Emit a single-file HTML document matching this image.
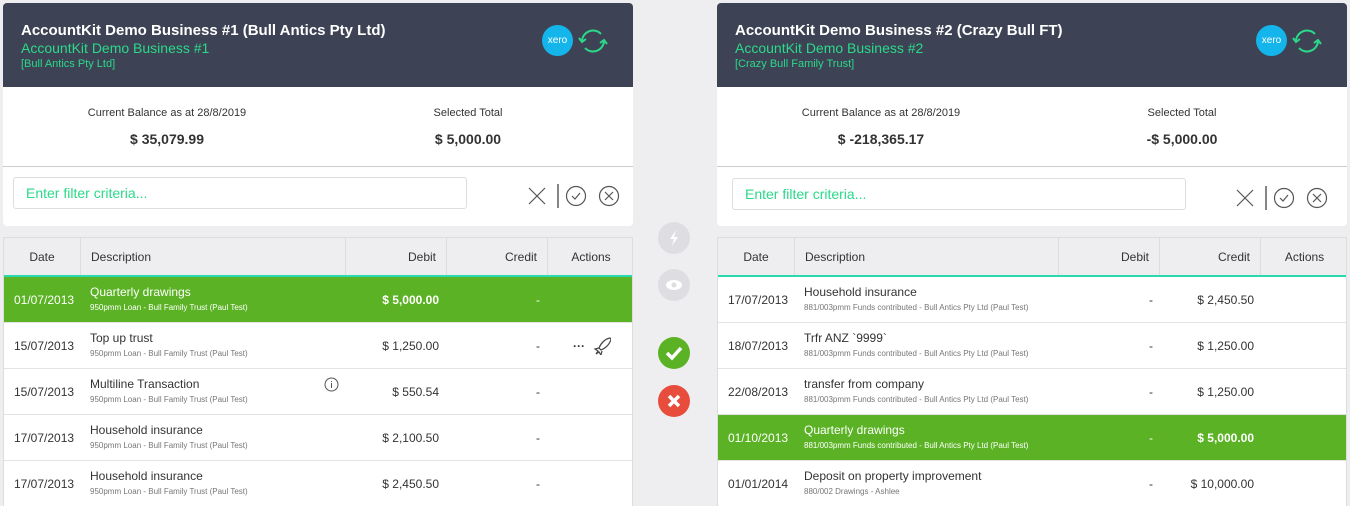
<!DOCTYPE html><html><head><style>
*{box-sizing:border-box;margin:0;padding:0}
html,body{width:1350px;height:506px;overflow:hidden}
body{background:#eeeef0;font-family:"Liberation Sans",sans-serif;position:relative;color:#333}
.p{position:absolute;top:3px;width:630px;height:520px}
.hd{height:84px;background:#3d4354;border-radius:4px 4px 0 0;padding:19px 18px;position:relative}
.t1{color:#fff;font-weight:bold;font-size:15px}
.t2{color:#2bd98a;font-size:14px;margin-top:1px}
.t3{color:#2bd98a;font-size:11px;margin-top:2px}
.xero{position:absolute;right:60px;top:22px;width:31px;height:31px;border-radius:50%;background:#13b5ea;color:#fff;font-size:10px;text-align:center;line-height:31px}
.sync{position:absolute;right:24px;top:22px}
.bal{background:#fff;height:80px;border-bottom:1px solid #ccc;position:relative;font-size:11px}
.bal div{position:absolute;text-align:center;width:240px}
.bal .v{font-weight:bold;font-size:14px;color:#333}
.flt{background:#fff;height:59px;position:relative;border-radius:0 0 4px 4px}
.in{position:absolute;left:10px;top:10px;width:454px;height:32px;border:1px solid #ddd;border-radius:3px;color:#2bd98a;font-size:14px;padding:7px 12px}
.ic{position:absolute;top:16px}
.tb{position:absolute;top:234px;left:0;width:630px;background:#fff;border:1px solid #ddd}
.row{height:46px;border-bottom:1px solid #e3e3e3;position:relative;font-size:12px}
.hr{height:39px;background:#eeeef0;border-bottom:2px solid #2bd9b0;font-size:12px}
.c{position:absolute;top:0;height:100%}
.hr .c{line-height:38px;border-right:1px solid #ddd}
.row .d{line-height:46px}
.g{background:#5ab224;color:#fff}
.s{font-size:8px;color:#777;margin-top:4px}
.g .s{color:#fff}
.ds{padding-top:8px}
.circ{position:absolute;left:658px;width:32px;height:32px;border-radius:50%}
</style></head><body>

<!-- LEFT -->
<div class="p" style="left:3px">
<div class="hd"><div class="t1">AccountKit Demo Business #1 (Bull Antics Pty Ltd)</div><div class="t2">AccountKit Demo Business #1</div><div class="t3">[Bull Antics Pty Ltd]</div>
<div class="xero">xero</div>
<svg class="sync" width="32" height="32" viewBox="0 0 32 32" fill="none" stroke="#2bd98a" stroke-width="2"><path d="M5 17a11 11 0 0 1 19-8"/><path d="M27 15a11 11 0 0 1-19 8"/><path d="M2 13l3 4 4-3"/><path d="M30 19l-3-4-4 3"/></svg></div>
<div class="bal"><div style="left:44px;top:20px">Current Balance as at 28/8/2019</div><div class="v" style="left:44px;top:44px">$ 35,079.99</div>
<div style="left:345px;top:20px">Selected Total</div><div class="v" style="left:345px;top:44px">$ 5,000.00</div></div>
<div class="flt"><div class="in">Enter filter criteria...</div>
<svg class="ic" style="left:524px" width="100" height="26" viewBox="0 0 100 26" fill="none" stroke="#555" stroke-width="1.2"><path d="M2 5l16 16M18 5L2 21"/><path d="M31 1v24" stroke="#333"/><circle cx="49" cy="13" r="9.5"/><path d="M45 13l3 3 5-6"/><circle cx="82" cy="13" r="9.5"/><path d="M78 9l8 8M86 9l-8 8"/></svg></div>
<div class="tb">
<div class="hr" style="position:relative"><div class="c" style="left:0;width:77px;text-align:center">Date</div><div class="c" style="left:77px;width:265px;padding-left:10px">Description</div><div class="c" style="left:342px;width:101px;text-align:right;padding-right:10px">Debit</div><div class="c" style="left:443px;width:101px;text-align:right;padding-right:10px">Credit</div><div class="c" style="left:544px;width:86px;text-align:center;border:none">Actions</div></div>
<div class="row g"><div class="c d" style="left:10px">01/07/2013</div><div class="c ds" style="left:86px">Quarterly drawings<div class="s">950pmm Loan - Bull Family Trust (Paul Test)</div></div><div class="c d" style="right:193px;font-weight:bold">$ 5,000.00</div><div class="c d" style="right:92px">-</div></div>
<div class="row"><div class="c d" style="left:10px">15/07/2013</div><div class="c ds" style="left:86px">Top up trust<div class="s">950pmm Loan - Bull Family Trust (Paul Test)</div></div><div class="c d" style="right:193px">$ 1,250.00</div><div class="c d" style="right:92px">-</div><div class="c d" style="left:569px;font-weight:bold">···</div><svg style="position:absolute;left:589px;top:14px" width="18" height="18" viewBox="0 0 18 18" fill="none" stroke="#444" stroke-width="1.2"><path d="M17 1c-5 1-9 5-11 10l2 2c5-2 9-6 10-11z"/><path d="M6 11l-4 1 3 2-2 3 3-2 2 3 1-4"/></svg></div>
<div class="row"><div class="c d" style="left:10px">15/07/2013</div><div class="c ds" style="left:86px">Multiline Transaction<div class="s">950pmm Loan - Bull Family Trust (Paul Test)</div></div><svg style="position:absolute;left:320px;top:8px" width="15" height="15" viewBox="0 0 15 15" fill="none" stroke="#555"><circle cx="7.5" cy="7.5" r="6.5"/><path d="M7.5 6v5M7.5 4v1"/></svg><div class="c d" style="right:193px">$ 550.54</div><div class="c d" style="right:92px">-</div></div>
<div class="row"><div class="c d" style="left:10px">17/07/2013</div><div class="c ds" style="left:86px">Household insurance<div class="s">950pmm Loan - Bull Family Trust (Paul Test)</div></div><div class="c d" style="right:193px">$ 2,100.50</div><div class="c d" style="right:92px">-</div></div>
<div class="row"><div class="c d" style="left:10px">17/07/2013</div><div class="c ds" style="left:86px">Household insurance<div class="s">950pmm Loan - Bull Family Trust (Paul Test)</div></div><div class="c d" style="right:193px">$ 2,450.50</div><div class="c d" style="right:92px">-</div></div>
</div></div>

<!-- MIDDLE -->
<div class="circ" style="top:222px;background:#dddde2"><svg width="32" height="32" viewBox="0 0 32 32"><path d="M18 8l-6 9h4l-2 7 6-9h-4z" fill="#fff"/></svg></div>
<div class="circ" style="top:269px;background:#dddde2"><svg width="32" height="32" viewBox="0 0 32 32"><ellipse cx="16" cy="16" rx="8" ry="5" fill="#fff"/><circle cx="16" cy="16" r="2.5" fill="#dddde2"/></svg></div>
<div class="circ" style="top:337px;background:#5ab224"><svg width="32" height="32" viewBox="0 0 32 32"><path d="M9 16l5 5 9-10" stroke="#fff" stroke-width="3.5" fill="none"/></svg></div>
<div class="circ" style="top:385px;background:#e74c3c"><svg width="32" height="32" viewBox="0 0 32 32"><path d="M11 11l10 10M21 11l-10 10" stroke="#fff" stroke-width="3.5"/></svg></div>

<!-- RIGHT -->
<div class="p" style="left:717px">
<div class="hd"><div class="t1">AccountKit Demo Business #2 (Crazy Bull FT)</div><div class="t2">AccountKit Demo Business #2</div><div class="t3">[Crazy Bull Family Trust]</div>
<div class="xero">xero</div>
<svg class="sync" width="32" height="32" viewBox="0 0 32 32" fill="none" stroke="#2bd98a" stroke-width="2"><path d="M5 17a11 11 0 0 1 19-8"/><path d="M27 15a11 11 0 0 1-19 8"/><path d="M2 13l3 4 4-3"/><path d="M30 19l-3-4-4 3"/></svg></div>
<div class="bal"><div style="left:44px;top:20px">Current Balance as at 28/8/2019</div><div class="v" style="left:44px;top:44px">$ -218,365.17</div>
<div style="left:345px;top:20px">Selected Total</div><div class="v" style="left:345px;top:44px">-$ 5,000.00</div></div>
<div class="flt"><div class="in" style="left:15px;width:454px;top:11px">Enter filter criteria...</div>
<svg class="ic" style="left:518px;top:18px" width="100" height="26" viewBox="0 0 100 26" fill="none" stroke="#555" stroke-width="1.2"><path d="M2 5l16 16M18 5L2 21"/><path d="M31 1v24" stroke="#333"/><circle cx="49" cy="13" r="9.5"/><path d="M45 13l3 3 5-6"/><circle cx="82" cy="13" r="9.5"/><path d="M78 9l8 8M86 9l-8 8"/></svg></div>
<div class="tb">
<div class="hr" style="position:relative"><div class="c" style="left:0;width:77px;text-align:center">Date</div><div class="c" style="left:77px;width:264px;padding-left:10px">Description</div><div class="c" style="left:341px;width:101px;text-align:right;padding-right:10px">Debit</div><div class="c" style="left:442px;width:101px;text-align:right;padding-right:10px">Credit</div><div class="c" style="left:543px;width:87px;text-align:center;border:none">Actions</div></div>
<div class="row"><div class="c d" style="left:10px">17/07/2013</div><div class="c ds" style="left:86px">Household insurance<div class="s">881/003pmm Funds contributed - Bull Antics Pty Ltd (Paul Test)</div></div><div class="c d" style="right:193px">-</div><div class="c d" style="right:92px">$ 2,450.50</div></div>
<div class="row"><div class="c d" style="left:10px">18/07/2013</div><div class="c ds" style="left:86px">Trfr ANZ `9999`<div class="s">881/003pmm Funds contributed - Bull Antics Pty Ltd (Paul Test)</div></div><div class="c d" style="right:193px">-</div><div class="c d" style="right:92px">$ 1,250.00</div></div>
<div class="row"><div class="c d" style="left:10px">22/08/2013</div><div class="c ds" style="left:86px">transfer from company<div class="s">881/003pmm Funds contributed - Bull Antics Pty Ltd (Paul Test)</div></div><div class="c d" style="right:193px">-</div><div class="c d" style="right:92px">$ 1,250.00</div></div>
<div class="row g"><div class="c d" style="left:10px">01/10/2013</div><div class="c ds" style="left:86px">Quarterly drawings<div class="s">881/003pmm Funds contributed - Bull Antics Pty Ltd (Paul Test)</div></div><div class="c d" style="right:193px">-</div><div class="c d" style="right:92px;font-weight:bold">$ 5,000.00</div></div>
<div class="row"><div class="c d" style="left:10px">01/01/2014</div><div class="c ds" style="left:86px">Deposit on property improvement<div class="s">880/002 Drawings - Ashlee</div></div><div class="c d" style="right:193px">-</div><div class="c d" style="right:92px">$ 10,000.00</div></div>
</div></div>
</body></html>
